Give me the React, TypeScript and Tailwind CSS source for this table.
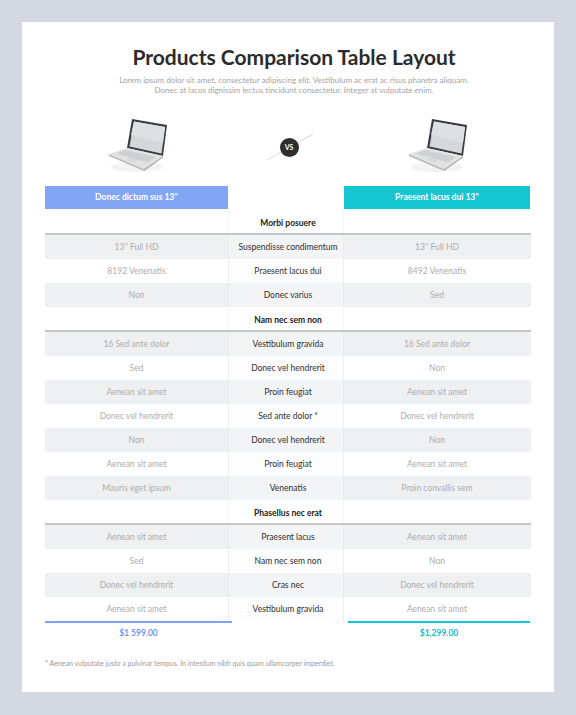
// Products comparison table layout

type Section = { title: string; rows: [string, string, string][] };

const sections: Section[] = [
  {
    title: 'Morbi posuere',
    rows: [
      ["13'' Full HD", 'Suspendisse condimentum', "13'' Full HD"],
      ['8192 Venenatis', 'Praesent lacus dui', '8492 Venenatis'],
      ['Non', 'Donec varius', 'Sed'],
    ],
  },
  {
    title: 'Nam nec sem non',
    rows: [
      ['16 Sed ante dolor', 'Vestibulum gravida', '16 Sed ante dolor'],
      ['Sed', 'Donec vel hendrerit', 'Non'],
      ['Aenean sit amet', 'Proin feugiat', 'Aenean sit amet'],
      ['Donec vel hendrerit', 'Sed ante dolor *', 'Donec vel hendrerit'],
      ['Non', 'Donec vel hendrerit', 'Non'],
      ['Aenean sit amet', 'Proin feugiat', 'Aenean sit amet'],
      ['Mauris eget ipsum', 'Venenatis', 'Proin convallis sem'],
    ],
  },
  {
    title: 'Phasellus nec erat',
    rows: [
      ['Aenean sit amet', 'Praesent lacus', 'Aenean sit amet'],
      ['Sed', 'Nam nec sem non', 'Non'],
      ['Donec vel hendrerit', 'Cras nec', 'Donec vel hendrerit'],
      ['Aenean sit amet', 'Vestibulum gravida', 'Aenean sit amet'],
    ],
  },
];

const COLS = 'grid grid-cols-[183px_116px_186px]';

function Laptop() {
  return (
    <svg width="60" height="56" viewBox="0 0 60 56">
      <ellipse cx="28" cy="49" rx="26" ry="5" fill="#f3f3f3" />
      {/* screen */}
      <polygon points="23,1 58,7 54,38 18,30" fill="#3b3e45" />
      <polygon points="25,3.5 56,9 52.5,35.5 20.5,28.5" fill="#d6d7da" />
      <polygon points="25,3.5 56,9 54,25 22,17" fill="#dfe0e2" />
      {/* base */}
      <polygon points="0,36 35,51 35,53 0,38" fill="#b9b9bb" />
      <polygon points="35,51 54,38 54,39.5 35,53" fill="#a9a9ab" />
      <polygon points="18,30 54,38 35,51 0,36" fill="#e2e2e3" />
      <polygon points="16,32 47,39 39,44.5 7,35.5" fill="#cfd0d2" />
      <polygon points="21,39.5 30,41.5 26,44.5 17,42" fill="#d6d7d8" />
    </svg>
  );
}

function Row({ cells, gray }: { cells: [string, string, string]; gray: boolean }) {
  return (
    <div className={`${COLS} h-[24px] ${gray ? 'bg-[#eff0f2]' : 'bg-white'}`}>
      <div className="flex items-center justify-center text-[8.5px] text-[#adadad]">{cells[0]}</div>
      <div
        className={`flex items-center justify-center pl-1 text-[8.5px] text-[#2f2f2f] border-x border-[#ececee] ${
          gray ? 'bg-[#f3f4f5]' : 'bg-[#fdfdfd]'
        }`}
      >
        {cells[1]}
      </div>
      <div className="flex items-center justify-center text-[8.5px] text-[#adadad]">{cells[2]}</div>
    </div>
  );
}

export default function App() {
  return (
    <div className="min-h-screen bg-[#d4d9e1] pt-[22px] pl-[22px] font-['Lato',sans-serif]">
      <div className="w-[532px] h-[670px] bg-white px-[23px] pt-[23px]">
        <h1 className="text-center text-[21px] leading-[24px] font-bold text-[#2b2b2b] pl-[12px]">
          Products Comparison Table Layout
        </h1>
        <p className="mt-[6px] text-center text-[8px] leading-[10px] text-[#a3a3a3] pl-[12px]">
          Lorem ipsum dolor sit amet, consectetur adipiscing elit. Vestibulum ac erat ac risus pharetra aliquam.
          <br />
          Donec at lacus dignissim lectus tincidunt consectetur. Integer at vulputate enim.
        </p>

        {/* products */}
        <div className={`${COLS} mt-[23px] h-[58px]`}>
          <div className="flex justify-center pl-[4px]">
            <Laptop />
          </div>
          <div className="relative flex items-center justify-center pl-[6px]">
            <svg className="absolute left-[37px] top-[14px]" width="50" height="30" viewBox="0 0 50 30">
              <line x1="2" y1="28" x2="48" y2="2" stroke="#d9d9d9" strokeWidth="1" />
            </svg>
            <div className="relative w-[19px] h-[19px] rounded-full bg-[#2e2e2e] text-white text-[7px] font-bold flex items-center justify-center">
              VS
            </div>
          </div>
          <div className="flex justify-center pl-[4px]">
            <Laptop />
          </div>
        </div>

        {/* headers */}
        <div className={`${COLS} mt-[10px]`}>
          <div className="h-[23px] bg-[#82a6f5] flex items-center justify-center text-[8.5px] font-bold text-white">
            Donec dictum sus 13''
          </div>
          <div />
          <div className="h-[23px] bg-[#17c6d3] flex items-center justify-center text-[8.5px] font-bold text-white">
            Praesent lacus dui 13''
          </div>
        </div>

        {/* table */}
        <div className="mt-[1px]">
          {sections.map((s) => (
            <div key={s.title}>
              <div className={`${COLS} h-[25px] border-b-2 border-[#c6c6c8]`}>
                <div />
                <div className="flex items-center justify-center pl-1 pt-[3px] text-[8.5px] font-bold text-[#222] whitespace-nowrap border-x border-[#f5f5f6]">
                  {s.title}
                </div>
                <div />
              </div>
              {s.rows.map((r, i) => (
                <Row key={i} cells={r} gray={i % 2 === 0} />
              ))}
            </div>
          ))}
        </div>

        {/* prices */}
        <div className={COLS}>
          <div className="border-t-2 border-[#7ea3f2] mr-[-4px] h-[22px] flex items-center justify-center text-[8.5px] font-bold text-[#6f95ee]">
            $1 599.00
          </div>
          <div />
          <div className="border-t-2 border-[#1ac3d0] ml-[4px] h-[22px] flex items-center justify-center text-[8.5px] font-bold text-[#19bccb]">
            $1,299.00
          </div>
        </div>

        <p className="mt-[15px] text-[7px] text-[#9a9a9a]">
          * Aenean vulputate justo a pulvinar tempus. In interdum nibh quis quam ullamcorper imperdiet.
        </p>
      </div>
    </div>
  );
}
